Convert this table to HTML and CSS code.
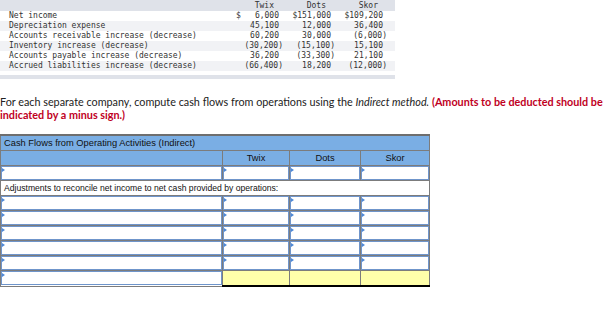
FILE: index.html
```html
<!DOCTYPE html>
<html>
<head>
<meta charset="utf-8">
<link rel="stylesheet" href="styles.css">
</head>
<body>
<div class="data">
  <div class="drow dhead">
    <div class="lbl"></div>
    <div class="hc">Twix</div>
    <div class="hc">Dots</div>
    <div class="hc">Skor</div>
    <div></div>
  </div>
  <div class="drow">
    <div class="lbl">Net income</div>
    <div class="num"><span>$</span><span class="pos">6,000</span></div>
    <div class="num"><span class="pos">$151,000</span></div>
    <div class="num"><span class="pos">$109,200</span></div>
    <div></div>
  </div>
  <div class="drow alt">
    <div class="lbl">Depreciation expense</div>
    <div class="num"><span class="pos">45,100</span></div>
    <div class="num"><span class="pos">12,000</span></div>
    <div class="num"><span class="pos">36,400</span></div>
    <div></div>
  </div>
  <div class="drow">
    <div class="lbl">Accounts receivable increase (decrease)</div>
    <div class="num"><span class="pos">60,200</span></div>
    <div class="num"><span class="pos">30,000</span></div>
    <div class="num"><span>(6,000)</span></div>
    <div></div>
  </div>
  <div class="drow alt">
    <div class="lbl">Inventory increase (decrease)</div>
    <div class="num"><span>(30,200)</span></div>
    <div class="num"><span>(15,100)</span></div>
    <div class="num"><span class="pos">15,100</span></div>
    <div></div>
  </div>
  <div class="drow">
    <div class="lbl">Accounts payable increase (decrease)</div>
    <div class="num"><span class="pos">36,200</span></div>
    <div class="num"><span>(33,300)</span></div>
    <div class="num"><span class="pos">21,100</span></div>
    <div></div>
  </div>
  <div class="drow alt">
    <div class="lbl">Accrued liabilities increase (decrease)</div>
    <div class="num"><span>(66,400)</span></div>
    <div class="num"><span class="pos">18,200</span></div>
    <div class="num"><span>(12,000)</span></div>
    <div></div>
  </div>
  <div class="dgap"></div>
  <div class="dfoot"></div>
</div>

<p class="instr">For each separate company, compute cash flows from operations using the <em>Indirect method.</em> <strong>(Amounts to be deducted should be indicated by a minus sign.)</strong></p>

<table class="cf">
  <colgroup>
    <col class="c-lbl"><col class="c-twix"><col class="c-dots"><col class="c-skor">
  </colgroup>
  <tr class="title"><td colspan="4">Cash Flows from Operating Activities (Indirect)</td></tr>
  <tr class="head"><td></td><td>Twix</td><td>Dots</td><td>Skor</td></tr>
  <tr class="in"><td><div class="inp"></div></td><td><div class="inp"></div></td><td><div class="inp"></div></td><td><div class="inp"></div></td></tr>
  <tr class="note"><td colspan="4">Adjustments to reconcile net income to net cash provided by operations:</td></tr>
  <tr class="in"><td><div class="inp"></div></td><td><div class="inp"></div></td><td><div class="inp"></div></td><td><div class="inp"></div></td></tr>
  <tr class="in"><td><div class="inp"></div></td><td><div class="inp"></div></td><td><div class="inp"></div></td><td><div class="inp"></div></td></tr>
  <tr class="in"><td><div class="inp"></div></td><td><div class="inp"></div></td><td><div class="inp"></div></td><td><div class="inp"></div></td></tr>
  <tr class="in"><td><div class="inp"></div></td><td><div class="inp"></div></td><td><div class="inp"></div></td><td><div class="inp"></div></td></tr>
  <tr class="in"><td><div class="inp"></div></td><td><div class="inp"></div></td><td><div class="inp"></div></td><td><div class="inp"></div></td></tr>
  <tr class="in total"><td><div class="inp"></div></td><td class="tot"></td><td class="tot"></td><td class="tot"></td></tr>
</table>
</body>
</html>
```
FILE: styles.css
```css
html, body {
  margin: 0;
  padding: 0;
  background: #ffffff;
}

.data {
  width: 395px;
  font-family: "DejaVu Sans Mono", "Liberation Mono", monospace;
  font-size: 8px;
  color: #333333;
}

.drow {
  display: grid;
  grid-template-columns: 236px 51px 52px 52px 4px;
  height: 10px;
  line-height: 10px;
  white-space: pre;
}

.drow.alt {
  background: #f1f2f5;
}

.dhead {
  height: 11px;
  line-height: 12px;
  background: #dfe2e9;
}

.lbl {
  padding-left: 9px;
}

.hc {
  text-align: right;
  padding-right: 13px;
}

.num {
  display: flex;
  justify-content: space-between;
  padding-right: 4px;
}

.num span:only-child {
  margin-left: auto;
}

.pos {
  padding-right: 4px;
}

.dgap {
  height: 4px;
}

.dfoot {
  height: 4px;
  background: #dfe2e9;
}

.instr {
  margin: 16px 0 0 0;
  font-family: Lato, "Open Sans", sans-serif;
  font-size: 10.8px;
  line-height: 13px;
  color: #222222;
  width: 612px;
}

.instr em {
  font-style: italic;
}

.instr strong {
  color: #c0001e;
  font-weight: bold;
}

.cf {
  margin-top: 13px;
  border-collapse: collapse;
  table-layout: fixed;
  width: 429px;
  font-family: "Liberation Sans", Arial, sans-serif;
  font-size: 9.3px;
  color: #111111;
}

.c-lbl { width: 222px; }
.c-twix { width: 67px; }
.c-dots { width: 71px; }
.c-skor { width: 69px; }

.cf td {
  border: 1px solid #7c7c7c;
  padding: 0;
  height: 14px;
}

.cf .title td {
  background: #7aaee4;
  padding-left: 3px;
  border-top: 2px solid #6e6e6e;
}

.cf .head td {
  background: #7aaee4;
  text-align: center;
}

.cf .note td {
  padding-left: 3px;
  background: #ffffff;
  font-size: 8.6px;
}

.inp {
  position: relative;
  height: 12px;
  border: 1px solid #6f95cb;
  background: #ffffff;
}

.inp::before {
  content: "";
  position: absolute;
  left: 0;
  top: 1px;
  border-left: 3px solid #4d88d6;
  border-top: 2px solid transparent;
  border-bottom: 2px solid transparent;
}

.cf .tot {
  background: #ffffaa;
  border-top: 1px solid #000000;
  border-bottom: 2px solid #000000;
}
```
